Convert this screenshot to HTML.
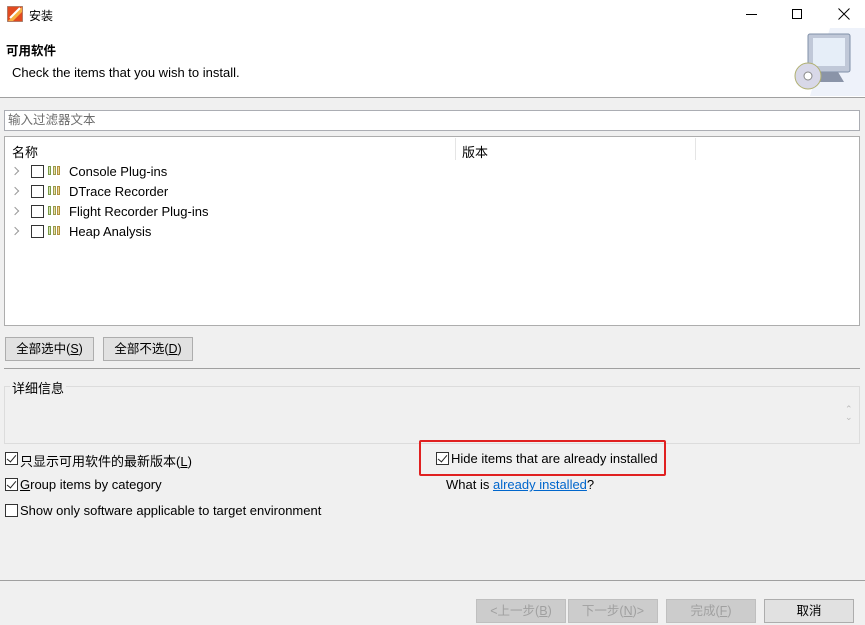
<!DOCTYPE html>
<html><head><meta charset="utf-8"><style>
*{box-sizing:border-box;margin:0;padding:0}
body{width:865px;height:625px;background:#f0f0f0;font-family:"Liberation Sans","Noto Sans CJK SC",sans-serif;font-size:13px;color:#000;position:relative;overflow:hidden}
.a{position:absolute;white-space:nowrap}
.cb{position:absolute;width:13px;height:13px;border:1px solid #333;background:#fff}
.cb.on::after{content:"";position:absolute;left:3px;top:0px;width:4px;height:8px;border:solid #222;border-width:0 1.5px 1.5px 0;transform:rotate(40deg)}
.btn{position:absolute;height:24px;border:1px solid #adadad;background:#e1e1e1;text-align:center;line-height:22px;font-size:12.5px}
.dis{background:#cccccc;border-color:#bfbfbf;color:#a0a0a0}
.chev{position:absolute;width:6px;height:6px;border:solid #999;border-width:1.5px 1.5px 0 0;transform:rotate(45deg)}
.bars{position:absolute;width:14px;height:9px}
.bars i{display:inline-block;width:3px;height:9px;margin-right:1.5px;border:1px solid #7a9a4a;background:#d8e8b0;vertical-align:top}
.bars i:nth-child(2){border-color:#9a9a50;background:#e8e0a0}
.bars i:nth-child(3){border-color:#b09040;background:#f0d890}
</style></head><body>
<div class="a" style="left:0;top:0;width:865px;height:98px;background:#fff;border-bottom:1px solid #a0a0a0"></div>
<svg class="a" style="left:7px;top:6px" width="16" height="16"><rect width="16" height="16" fill="#e24a20"/><path d="M1 15 L15 1 L15 6 L6 15Z" fill="#f6b040"/><path d="M3 12 L13 2" stroke="#fff" stroke-width="2"/><rect x="0" y="0" width="16" height="16" fill="none" stroke="#8aa" stroke-width="1"/></svg>
<div class="a" style="left:29px;top:7px;font-size:12px">安装</div>
<div class="a" style="left:746px;top:14px;width:11px;height:1px;background:#000"></div>
<div class="a" style="left:792px;top:9px;width:10px;height:10px;border:1px solid #000"></div>
<svg class="a" style="left:838px;top:8px" width="12" height="12"><path d="M0.5 0.5L11.5 11.5M11.5 0.5L0.5 11.5" stroke="#000"/></svg>
<div class="a" style="left:6px;top:40px;font-weight:bold;font-size:12.5px">可用软件</div>
<div class="a" style="left:12px;top:65px">Check the items that you wish to install.</div>
<svg class="a" style="left:790px;top:28px" width="75" height="68"><path d="M40 0 L75 0 L75 68 L20 68Z" fill="#eef2fa"/><rect x="18" y="6" width="42" height="38" rx="2" fill="#c0c8d8" stroke="#8090a8"/><rect x="23" y="10" width="32" height="28" fill="#e6eef8"/><path d="M30 44 L48 44 L54 54 L28 54Z" fill="#8a94a8"/><circle cx="18" cy="48" r="13" fill="#d8d8e8" stroke="#b0b070"/><circle cx="18" cy="48" r="4" fill="#fff" stroke="#888"/></svg>
<div class="a" style="left:4px;top:110px;width:856px;height:21px;background:#fff;border:1px solid #abadb3;color:#6d6d6d;padding:1px 3px;line-height:17px;font-size:12.5px">输入过滤器文本</div>
<div class="a" style="left:4px;top:136px;width:856px;height:190px;background:#fff;border:1px solid #adadad"></div>
<div class="a" style="left:455px;top:138px;width:1px;height:22px;background:#e5e5e5"></div>
<div class="a" style="left:695px;top:138px;width:1px;height:22px;background:#e5e5e5"></div>
<div class="a" style="left:12px;top:142px">名称</div>
<div class="a" style="left:462px;top:142px">版本</div>
<div class="chev" style="left:12px;top:168px"></div><div class="cb" style="left:31px;top:165px"></div><div class="bars" style="left:48px;top:166px"><i></i><i></i><i></i></div><div class="a" style="left:69px;top:164px">Console Plug-ins</div>
<div class="chev" style="left:12px;top:188px"></div><div class="cb" style="left:31px;top:185px"></div><div class="bars" style="left:48px;top:186px"><i></i><i></i><i></i></div><div class="a" style="left:69px;top:184px">DTrace Recorder</div>
<div class="chev" style="left:12px;top:208px"></div><div class="cb" style="left:31px;top:205px"></div><div class="bars" style="left:48px;top:206px"><i></i><i></i><i></i></div><div class="a" style="left:69px;top:204px">Flight Recorder Plug-ins</div>
<div class="chev" style="left:12px;top:228px"></div><div class="cb" style="left:31px;top:225px"></div><div class="bars" style="left:48px;top:226px"><i></i><i></i><i></i></div><div class="a" style="left:69px;top:224px">Heap Analysis</div>
<div class="btn" style="left:5px;top:337px;width:89px">全部选中(<u>S</u>)</div>
<div class="btn" style="left:103px;top:337px;width:90px">全部不选(<u>D</u>)</div>
<div class="a" style="left:4px;top:368px;width:856px;height:1px;background:#a0a0a0"></div>
<div class="a" style="left:4px;top:386px;width:856px;height:58px;border:1px solid #dcdcdc"></div>
<div class="a" style="left:10px;top:378px;background:#f0f0f0;padding:0 2px">详细信息</div>
<div class="a" style="left:845px;top:405px;color:#bbb;font-size:9px;line-height:8px">⌃<br>⌄</div>
<div class="cb on" style="left:5px;top:452px"></div><div class="a" style="left:20px;top:451px">只显示可用软件的最新版本(<u>L</u>)</div>
<div class="cb on" style="left:5px;top:478px"></div><div class="a" style="left:20px;top:477px"><u>G</u>roup items by category</div>
<div class="cb" style="left:5px;top:504px"></div><div class="a" style="left:20px;top:503px">Show only software applicable to target environment</div>
<div class="a" style="left:419px;top:440px;width:247px;height:36px;border:2px solid #e02020;border-radius:2px"></div>
<div class="cb on" style="left:436px;top:452px"></div><div class="a" style="left:451px;top:451px">Hide items that are already installed</div>
<div class="a" style="left:446px;top:477px">What is <span style="color:#0066cc;text-decoration:underline">already installed</span>?</div>
<div class="a" style="left:0;top:580px;width:865px;height:1px;background:#a0a0a0"></div>
<div class="btn dis" style="left:476px;top:599px;width:90px">&lt;上一步(<u>B</u>)</div>
<div class="btn dis" style="left:568px;top:599px;width:90px">下一步(<u>N</u>)&gt;</div>
<div class="btn dis" style="left:666px;top:599px;width:90px">完成(<u>F</u>)</div>
<div class="btn" style="left:764px;top:599px;width:90px">取消</div>
</body></html>
